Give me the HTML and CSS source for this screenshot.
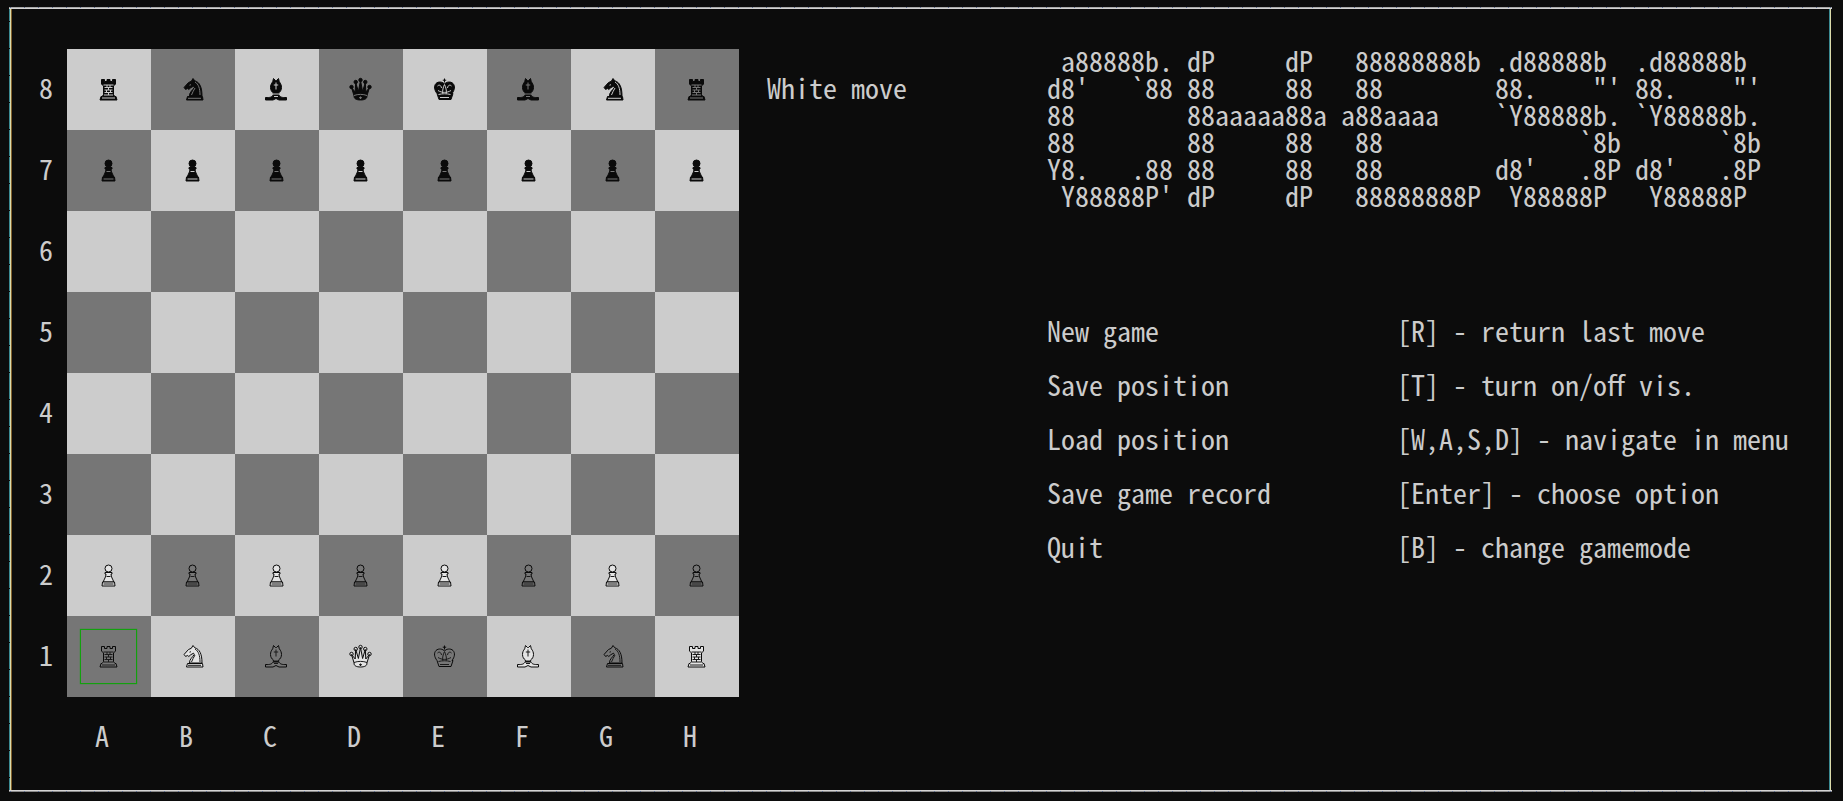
FILE: index.html
```html
<!DOCTYPE html>
<html lang="en">
<head>
<meta charset="utf-8">
<title>Chess</title>
<link rel="stylesheet" href="styles.css">
</head>
<body>
<svg class="sprites" aria-hidden="true">
  <symbol id="rook" viewBox="0 0 24 25">
    <path class="shape" d="M4.500 2.500h3v2h2.500v-2h3v2h2.500v-2h3v4.700l-2 1.600v9l1.500 1.700h1l1 3.500H3l1-3.500h1l1.500-1.700v-9L4.500 7.200z"/>
    <path class="detail" d="M6.500 8h10M7.500 10.500h8M7.500 13h8M7.500 15.500h8M7 18h9M10 8v2.500M13 8v2.500M11.500 10.500V13M9.500 13v2.500M13.500 13v2.500M11.500 15.500V18M5 21h13"/>
  </symbol>
  <symbol id="knight" viewBox="0 0 24 25">
    <path class="shape" d="M12 1.500l1.800 2.300c4.700 1.300 7.200 6 7.200 15.200H8.500c-.3-3.500 3-5.600 4.800-8.500l-.8-1.300-2.700 1.500-2 1.800-1.100-1-2.200.9-1.400-2L7.500 5.500l2.800-1.200z"/>
    <path class="shape" d="M6.500 19.500h15l.5 3.500H5.500z"/>
    <path class="detail" d="M14 5c3.500 2 5 6.500 5 13M8.500 8.200l1.500-.5M14 11c-1 2.500-2.800 4.300-3.500 7M7 21.300h13"/>
  </symbol>
  <symbol id="bishop" viewBox="0 0 24 25">
    <path class="shape" d="M8.500 1.500l2 2h1l2-2 .8 3.300c1.500 1.800 2.200 3.700 2.200 5.700 0 2.600-1.300 4.400-2.800 5.400v1.600H8.300v-1.600C6.800 14.900 5.500 13.100 5.500 10.500c0-2 .7-3.900 2.200-5.700z"/>
    <path class="shape" d="M8 18h6c1 2 2.800 2.800 7.500 2.500V23h-7.500L11 21.500 8 23H.500v-2.500C5.200 20.800 7 20 8 18z"/>
    <path class="detail" d="M11 5.500v7M8.800 8h4.400M8 17h6M9 19.500h4"/>
  </symbol>
  <symbol id="queen" viewBox="0 0 24 25">
    <circle class="shape" cx="2.500" cy="10" r="1.700"/>
    <circle class="shape" cx="6.700" cy="5" r="1.700"/>
    <circle class="shape" cx="11.500" cy="3" r="1.700"/>
    <circle class="shape" cx="16.300" cy="5" r="1.700"/>
    <circle class="shape" cx="20.500" cy="10" r="1.700"/>
    <path class="shape" d="M2.500 10.500l3.700 4.500.5-9.500 2.700 9 2.100-11 2.100 11 2.700-9 .5 9.500 3.700-4.500-2.600 8.500c.4 2.800-2.500 4-6.400 4s-6.800-1.200-6.400-4z"/>
    <path class="detail" d="M5 18.500c4-1.500 9-1.500 13 0M11.500 19.500v2.500M10 20.700h3"/>
  </symbol>
  <symbol id="king" viewBox="0 0 24 25">
    <path class="shape" d="M11.500 1.500v4M9.800 3.200h3.400"/>
    <path class="shape" d="M11.500 7c1.500-2 6-3 8.500-.5 2.400 2.600 1.700 6.500-1 10l1 0-2 6H6l-2-6c-2.700-3.500-3.400-7.400-1-10C5.500 4 10 5 11.500 7z"/>
    <path class="detail" d="M11.500 7.500c-1.500 3-2 6-2 9M11.500 7.500c1.500 3 2 6 2 9M4.500 9c1.500-1.500 3.500-1 4 2M18.500 9c-1.500-1.500-3.500-1-4 2M5 13.500c4 2.500 9 2.500 13 0M5.500 17.500c4-1 8-1 12 0M7 20.500h9"/>
  </symbol>
  <symbol id="pawn" viewBox="0 0 24 25">
    <circle class="shape" cx="11.500" cy="5.500" r="3.500"/>
    <path class="shape" d="M8 9.500h7v1.500h-1c0 3 1.800 5 2.800 8H6.200c1-3 2.800-5 2.800-8H8z"/>
    <path class="shape" d="M5.500 19h12l.5 4H5z"/>
    <path class="detail" d="M9.500 13.500h4M6.500 21h10"/>
  </symbol>
</svg>
<main class="frame">
  <section class="game">
    <div class="ranks">
      <span>8</span><span>7</span><span>6</span><span>5</span><span>4</span><span>3</span><span>2</span><span>1</span>
    </div>
    <div class="board">
      <div class="sq l"><svg class="piece b"><use href="#rook"/></svg></div>
      <div class="sq d"><svg class="piece b"><use href="#knight"/></svg></div>
      <div class="sq l"><svg class="piece b"><use href="#bishop"/></svg></div>
      <div class="sq d"><svg class="piece b"><use href="#queen"/></svg></div>
      <div class="sq l"><svg class="piece b"><use href="#king"/></svg></div>
      <div class="sq d"><svg class="piece b"><use href="#bishop"/></svg></div>
      <div class="sq l"><svg class="piece b"><use href="#knight"/></svg></div>
      <div class="sq d"><svg class="piece b"><use href="#rook"/></svg></div>

      <div class="sq d"><svg class="piece b"><use href="#pawn"/></svg></div>
      <div class="sq l"><svg class="piece b"><use href="#pawn"/></svg></div>
      <div class="sq d"><svg class="piece b"><use href="#pawn"/></svg></div>
      <div class="sq l"><svg class="piece b"><use href="#pawn"/></svg></div>
      <div class="sq d"><svg class="piece b"><use href="#pawn"/></svg></div>
      <div class="sq l"><svg class="piece b"><use href="#pawn"/></svg></div>
      <div class="sq d"><svg class="piece b"><use href="#pawn"/></svg></div>
      <div class="sq l"><svg class="piece b"><use href="#pawn"/></svg></div>

      <div class="sq l"></div><div class="sq d"></div><div class="sq l"></div><div class="sq d"></div><div class="sq l"></div><div class="sq d"></div><div class="sq l"></div><div class="sq d"></div>
      <div class="sq d"></div><div class="sq l"></div><div class="sq d"></div><div class="sq l"></div><div class="sq d"></div><div class="sq l"></div><div class="sq d"></div><div class="sq l"></div>
      <div class="sq l"></div><div class="sq d"></div><div class="sq l"></div><div class="sq d"></div><div class="sq l"></div><div class="sq d"></div><div class="sq l"></div><div class="sq d"></div>
      <div class="sq d"></div><div class="sq l"></div><div class="sq d"></div><div class="sq l"></div><div class="sq d"></div><div class="sq l"></div><div class="sq d"></div><div class="sq l"></div>

      <div class="sq l"><svg class="piece w"><use href="#pawn"/></svg></div>
      <div class="sq d"><svg class="piece w"><use href="#pawn"/></svg></div>
      <div class="sq l"><svg class="piece w"><use href="#pawn"/></svg></div>
      <div class="sq d"><svg class="piece w"><use href="#pawn"/></svg></div>
      <div class="sq l"><svg class="piece w"><use href="#pawn"/></svg></div>
      <div class="sq d"><svg class="piece w"><use href="#pawn"/></svg></div>
      <div class="sq l"><svg class="piece w"><use href="#pawn"/></svg></div>
      <div class="sq d"><svg class="piece w"><use href="#pawn"/></svg></div>

      <div class="sq d cursor"><svg class="piece w"><use href="#rook"/></svg></div>
      <div class="sq l"><svg class="piece w"><use href="#knight"/></svg></div>
      <div class="sq d"><svg class="piece w"><use href="#bishop"/></svg></div>
      <div class="sq l"><svg class="piece w"><use href="#queen"/></svg></div>
      <div class="sq d"><svg class="piece w"><use href="#king"/></svg></div>
      <div class="sq l"><svg class="piece w"><use href="#bishop"/></svg></div>
      <div class="sq d"><svg class="piece w"><use href="#knight"/></svg></div>
      <div class="sq l"><svg class="piece w"><use href="#rook"/></svg></div>
    </div>
    <div class="files">
      <span>A</span><span>B</span><span>C</span><span>D</span><span>E</span><span>F</span><span>G</span><span>H</span>
    </div>
    <div class="status">White move</div>
  </section>
  <section class="side">
<pre class="logo"> a88888b. dP     dP   88888888b .d88888b  .d88888b
d8'   `88 88     88   88        88.    "' 88.    "'
88        88aaaaa88a a88aaaa    `Y88888b. `Y88888b.
88        88     88   88              `8b       `8b
Y8.   .88 88     88   88        d8'   .8P d8'   .8P
 Y88888P' dP     dP   88888888P  Y88888P   Y88888P</pre>
    <div class="menu">
      <span>New game</span><span>[R] - return last move</span>
      <span>Save position</span><span>[T] - turn on/off vis.</span>
      <span>Load position</span><span>[W,A,S,D] - navigate in menu</span>
      <span>Save game record</span><span>[Enter] - choose option</span>
      <span>Quit</span><span>[B] - change gamemode</span>
    </div>
  </section>
</main>
</body>
</html>
```
FILE: styles.css
```css
html, body {
  margin: 0;
  height: 100%;
  background: #0c0c0c;
}
body {
  color: #cccccc;
  font-family: "Noto Sans CJK JP", "Liberation Mono", monospace;
  font-feature-settings: "hwid" 1;
  font-size: 28px;
  line-height: 27px;
  overflow: hidden;
}
.sprites {
  display: none;
}
.frame {
  box-sizing: border-box;
  width: 1823px;
  height: 785px;
  margin: 7px 0 0 9px;
  padding-left: 3px;
  display: flex;
  background-color: #0c0c0c;
  background-repeat: no-repeat;
  background-image:
    repeating-linear-gradient(90deg, #5a6a90 0 1px, transparent 1px 14px),
    repeating-linear-gradient(90deg, #5a6a90 0 1px, transparent 1px 14px),
    repeating-linear-gradient(180deg, #0c0c0c 0 1px, transparent 1px 27px),
    repeating-linear-gradient(180deg, #0c0c0c 0 1px, transparent 1px 27px),
    linear-gradient(#a8a8a8, #a8a8a8),
    linear-gradient(#d4d4d4, #d4d4d4),
    linear-gradient(#d4d4d4, #d4d4d4),
    linear-gradient(#8a8a8a, #8a8a8a),
    linear-gradient(#3a8a92, #3a8a92),
    linear-gradient(#dcdcac, #dcdcac),
    linear-gradient(#80602c, #80602c),
    linear-gradient(#3a8a92, #3a8a92),
    linear-gradient(#dcdcac, #dcdcac);
  background-size:
    100% 1px, 100% 1px,
    1px 100%, 1px 100%,
    100% 1px, 100% 1px, 100% 1px, 100% 1px,
    1px 100%, 1px 100%, 1px 100%, 1px 100%, 1px 100%;
  background-position:
    1px 0, 1px 100%,
    0 14px, 100% 14px,
    0 0, 0 1px, 0 calc(100% - 1px), 0 100%,
    0 0, 1px 0, 2px 0, calc(100% - 2px) 0, calc(100% - 1px) 0;
}
.game {
  display: grid;
  grid-template-columns: 55px 672px auto;
  grid-template-rows: 648px 81px;
  width: 1035px;
  padding-top: 42px;
}
.ranks {
  display: grid;
  grid-auto-rows: 81px;
  padding-left: 27px;
  align-items: center;
}
.ranks span {
  padding-bottom: 4px;
}
.board {
  display: grid;
  grid-template-columns: repeat(8, 84px);
  grid-template-rows: repeat(8, 81px);
}
.sq {
  position: relative;
  display: flex;
  align-items: center;
  justify-content: center;
}
.l {
  background: #cccccc;
  --sq: #cccccc;
  --fill: #e4e4e4;
}
.d {
  background: #767676;
  --sq: #767676;
  --fill: #767676;
}
.piece {
  width: 24px;
  height: 25px;
  display: block;
}
.b {
  --body: #0a0a0a;
  --line: var(--sq);
}
.w {
  --body: var(--fill);
  --line: #1a1a1a;
}
.shape {
  fill: var(--body);
  stroke: #0a0a0a;
  stroke-width: 1;
  stroke-linejoin: round;
}
.detail {
  fill: none;
  stroke: var(--line);
  stroke-width: 1;
}
.cursor::after {
  content: "";
  position: absolute;
  left: 13px;
  top: 13px;
  width: 55px;
  height: 53px;
  border: 1px solid #13a10e;
  box-shadow: 0 0 1px #13a10e;
}
.files {
  grid-column: 2;
  grid-row: 2;
  display: grid;
  grid-template-columns: repeat(8, 84px);
  align-items: center;
  padding-left: 28px;
}
.files span {
  padding-bottom: 4px;
}
.status {
  grid-column: 3;
  grid-row: 1;
  padding: 25px 0 0 28px;
  white-space: nowrap;
}
.side {
  flex: 1;
  padding-top: 40px;
}
.logo {
  margin: 0 0 108px;
  font: inherit;
  font-feature-settings: inherit;
}
.menu {
  display: grid;
  grid-template-columns: 350px auto;
  grid-auto-rows: 54px;
}
```
